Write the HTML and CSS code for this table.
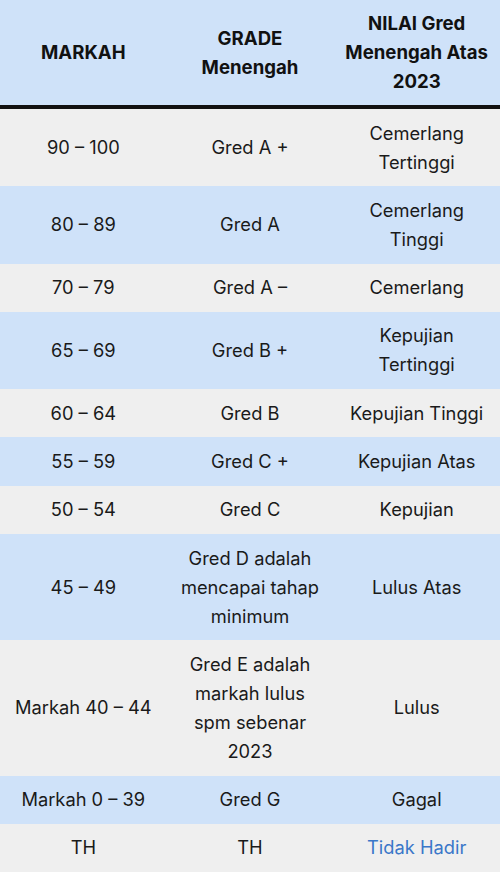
FILE: index.html
```html
<!DOCTYPE html>
<html lang="ms">
<head>
<meta charset="utf-8">
<title>Gred SPM 2023</title>
<link rel="stylesheet" href="styles.css">
</head>
<body>
<table class="grades">
  <thead>
    <tr>
      <th>MARKAH</th>
      <th>GRADE Menengah</th>
      <th>NILAI Gred Menengah Atas 2023</th>
    </tr>
  </thead>
  <tbody>
    <tr class="grey"><td>90 – 100</td><td>Gred A +</td><td>Cemerlang Tertinggi</td></tr>
    <tr class="blue"><td>80 – 89</td><td>Gred A</td><td>Cemerlang Tinggi</td></tr>
    <tr class="grey"><td>70 – 79</td><td>Gred A –</td><td>Cemerlang</td></tr>
    <tr class="blue"><td>65 – 69</td><td>Gred B +</td><td>Kepujian Tertinggi</td></tr>
    <tr class="grey"><td>60 – 64</td><td>Gred B</td><td>Kepujian Tinggi</td></tr>
    <tr class="blue"><td>55 – 59</td><td>Gred C +</td><td>Kepujian Atas</td></tr>
    <tr class="grey"><td>50 – 54</td><td>Gred C</td><td>Kepujian</td></tr>
    <tr class="blue"><td>45 – 49</td><td>Gred D adalah mencapai tahap minimum</td><td>Lulus Atas</td></tr>
    <tr class="grey"><td>Markah 40 – 44</td><td>Gred E adalah markah lulus spm sebenar 2023</td><td>Lulus</td></tr>
    <tr class="blue"><td>Markah 0 – 39</td><td>Gred G</td><td>Gagal</td></tr>
    <tr class="grey"><td>TH</td><td>TH</td><td><a class="link" href="#">Tidak Hadir</a></td></tr>
  </tbody>
</table>
</body>
</html>
```
FILE: styles.css
```css
html, body {
  margin: 0;
  padding: 0;
  background: #efefef;
}
body {
  font-family: Inter, "Noto Sans", "Liberation Sans", sans-serif;
  font-size: 18.3px;
  color: #1a1a1a;
  -webkit-font-smoothing: antialiased;
}
.grades {
  width: 500px;
  border-collapse: collapse;
  table-layout: fixed;
}
.grades th,
.grades td {
  width: 33.333%;
  padding: 9.65px 10px;
  line-height: 29px;
  text-align: center;
  vertical-align: middle;
}
.grades thead tr {
  background: #cfe2f9;
}
.grades th {
  font-size: 18.6px;
  font-weight: 700;
  color: #111;
  padding: 9px 10px;
  border-bottom: 4px solid #111;
}
.grey { background: #efefef; }
.blue { background: #cfe2f9; }
.link {
  color: #3a77c9;
  text-decoration: none;
}
```
